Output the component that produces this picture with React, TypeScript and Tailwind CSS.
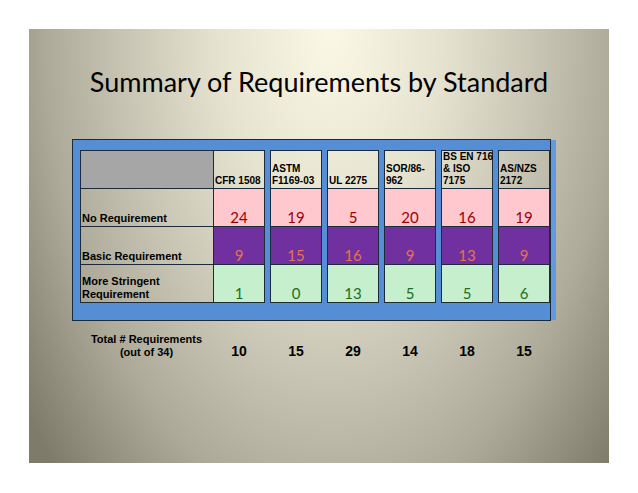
const standards = [
  { name: ['CFR 1508'], none: 24, basic: 9, more: 1, total: 10 },
  { name: ['ASTM', 'F1169-03'], none: 19, basic: 15, more: 0, total: 15 },
  { name: ['UL 2275'], none: 5, basic: 16, more: 13, total: 29 },
  { name: ['SOR/86-', '962'], none: 20, basic: 9, more: 5, total: 14 },
  { name: ['BS EN 716', '& ISO', '7175'], none: 16, basic: 13, more: 5, total: 18 },
  { name: ['AS/NZS', '2172'], none: 19, basic: 9, more: 6, total: 15 },
];

const arial = "font-['Liberation_Sans',Arial,sans-serif]";

const StandardColumn = ({ s }: { s: (typeof standards)[number] }) => (
  <div className="w-[52px] border-x border-[#1c2a3a] flex flex-col">
    <div className={`h-[39px] border-y border-[#1c2a3a] flex flex-col justify-end px-[1px] pb-[1px] text-[10px] leading-[12px] font-bold text-black ${arial}`}>
      {s.name.map((line) => (
        <span key={line} className="whitespace-nowrap">{line}</span>
      ))}
    </div>
    <div className="h-[38px] border-b border-[#1c2a3a] bg-[#ffc7ce] flex items-end justify-center text-[15px] leading-none pb-[1px] text-[#9c0006] font-['Lato',sans-serif]">
      {s.none}
    </div>
    <div className="h-[38px] border-b border-[#1c2a3a] bg-[#7030a0] flex items-end justify-center text-[15px] leading-none pb-[1px] text-[#e5734f] font-['Lato',sans-serif]">
      {s.basic}
    </div>
    <div className="h-[38px] border-b border-[#1c2a3a] bg-[#c6efce] flex items-end justify-center text-[15px] leading-none pb-[1px] text-[#1e6e1e] font-['Lato',sans-serif]">
      {s.more}
    </div>
  </div>
);

const App = () => {
  return (
    <div className="min-h-screen bg-white pt-[29px] pl-[29px]">
      <div className="w-[580px] h-[434px] flex flex-col bg-[radial-gradient(ellipse_380px_640px_at_52%_0%,#fbf8e6_0%,#e6e2d0_30%,#c8c4b3_55%,#aeaa99_75%,#7f7b6b_100%)]">
        <h1 className="mt-[39px] text-center text-[27px] leading-none text-black font-['Lato',sans-serif]">
          Summary of Requirements by Standard
        </h1>

        <div className="mt-[45px] ml-[44px] self-start flex border-[#558ed5] border-t-[10px] border-l-[7px] border-b-[17px] border-r-0 outline outline-[#1c2a3a] shadow-[6px_0_0_#629ae0]">
          <div className={`w-[133px] border-l border-[#1c2a3a] flex flex-col text-[11px] font-bold text-black ${arial}`}>
            <div className="h-[39px] border-y border-[#1c2a3a] bg-[#a6a6a6]" />
            <div className="h-[38px] border-b border-[#1c2a3a] flex items-end pl-[1px] pb-[1px] leading-[13px]">
              No Requirement
            </div>
            <div className="h-[38px] border-b border-[#1c2a3a] flex items-end pl-[1px] pb-[1px] leading-[13px]">
              Basic Requirement
            </div>
            <div className="h-[38px] border-b border-[#1c2a3a] flex flex-col justify-end pl-[1px] pb-[1px] leading-[13px]">
              <span>More Stringent</span>
              <span>Requirement</span>
            </div>
          </div>
          {standards.map((s, i) => (
            <div key={s.name.join()} className="flex">
              {i > 0 && <div className="w-[5px] bg-[#558ed5]" />}
              <StandardColumn s={s} />
            </div>
          ))}
        </div>

        <div className={`mt-[13px] ml-[51px] flex items-end text-black font-bold ${arial}`}>
          <div className="w-[133px] text-center text-[11px] leading-[13px]">
            <p>Total # Requirements</p>
            <p>(out of 34)</p>
          </div>
          <div className="flex gap-[5px]">
            {standards.map((s) => (
              <span key={s.name.join()} className="w-[52px] text-center text-[14px] leading-[15px]">
                {s.total}
              </span>
            ))}
          </div>
        </div>
      </div>
    </div>
  );
};

export default App;
